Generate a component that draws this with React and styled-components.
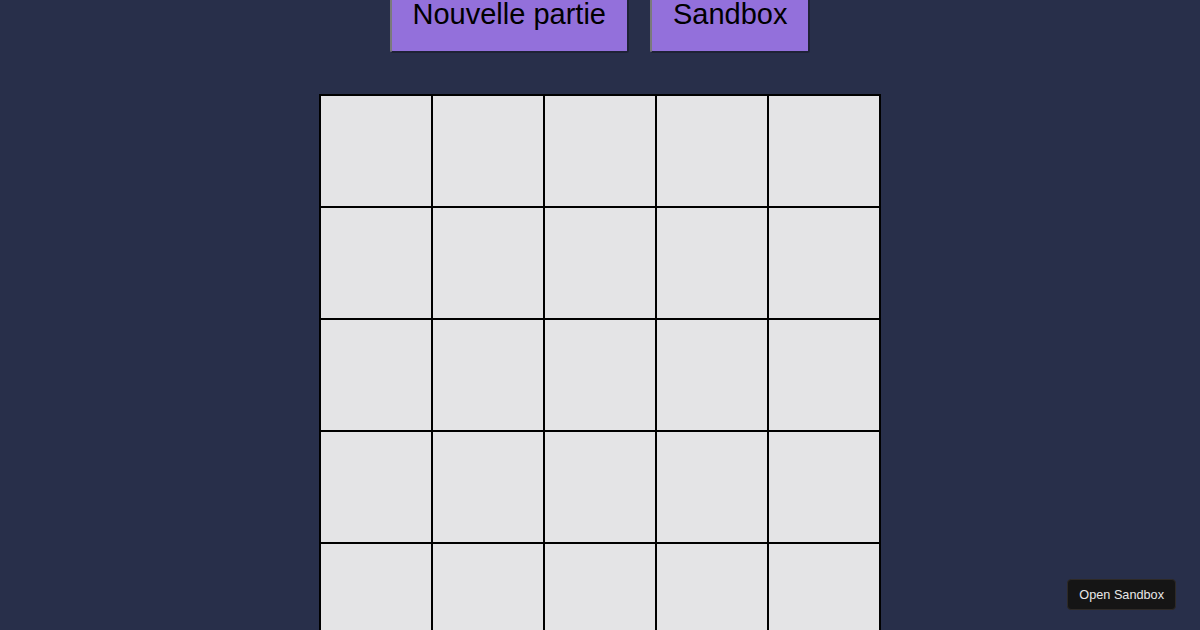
import React from "react";
import styled, { createGlobalStyle } from "styled-components";

const GlobalStyle = createGlobalStyle`
  html, body {
    margin: 0;
    padding: 0;
    background-color: #282f4a;
    overflow: hidden;
    font-family: "Liberation Sans", Arial, sans-serif;
  }
`;

const Page = styled.div`
  display: flex;
  flex-direction: column;
  align-items: center;
  min-height: 630px;
`;

const Toolbar = styled.div`
  display: flex;
  gap: 21px;
  margin-top: -23px;
`;

const Button = styled.button`
  font-family: "Liberation Sans", Arial, sans-serif;
  font-size: 29px;
  line-height: 33px;
  color: #000;
  background-color: #9370db;
  padding: 19px 21px 20px;
  border: 2px solid;
  border-color: #7a7a7a #1e2236 #1e2236 #7a7a7a;
  border-radius: 3px;
  cursor: pointer;
`;

const Board = styled.div`
  margin-top: 41px;
  display: grid;
  grid-template-columns: repeat(5, 110px);
  grid-auto-rows: 110px;
  gap: 2px;
  padding: 2px;
  background-color: #000;
`;

const Cell = styled.div`
  background-color: #e4e4e6;
`;

const SandboxLink = styled.a`
  position: fixed;
  right: 24px;
  bottom: 20px;
  display: flex;
  align-items: center;
  height: 31px;
  box-sizing: border-box;
  padding: 0 11px;
  background-color: #151515;
  border: 1px solid #2e2a27;
  border-radius: 4px;
  color: #e8e8e8;
  font-size: 12.7px;
  font-family: "Liberation Sans", Arial, sans-serif;
  text-decoration: none;
`;

function App() {
  const cells = Array.from({ length: 25 }, (_, i) => i);
  return (
    <>
      <GlobalStyle />
      <Page>
        <Toolbar>
          <Button>Nouvelle partie</Button>
          <Button>Sandbox</Button>
        </Toolbar>
        <Board>
          {cells.map((i) => (
            <Cell key={i} />
          ))}
        </Board>
      </Page>
      <SandboxLink href="#">Open Sandbox</SandboxLink>
    </>
  );
}

export default App;
